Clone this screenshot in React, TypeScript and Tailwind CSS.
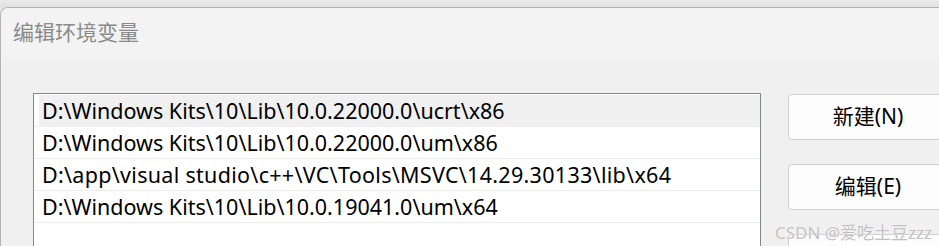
import React from "react";

const rows = [
  "D:\\Windows Kits\\10\\Lib\\10.0.22000.0\\ucrt\\x86",
  "D:\\Windows Kits\\10\\Lib\\10.0.22000.0\\um\\x86",
  "D:\\app\\visual studio\\c++\\VC\\Tools\\MSVC\\14.29.30133\\lib\\x64",
  "D:\\Windows Kits\\10\\Lib\\10.0.19041.0\\um\\x64",
];

export default function App() {
  return (
    <div
      className="relative w-[939px] h-[246px] overflow-hidden bg-[#e4e4e4] flex flex-col"
      style={{ fontFamily: '"Noto Sans", "Noto Sans CJK SC", sans-serif' }}
    >
      <div className="h-[7px] bg-gradient-to-b from-[#ececec] to-[#e0e0e0] shrink-0" />
      <div className="flex-1 flex flex-col rounded-tl-[8px] border-t border-l border-[#b4b4b4] bg-[#f0f0f0] overflow-hidden">
        <div className="h-[50px] shrink-0 bg-[#f3f3f3] pl-[12px] pt-[10px] text-[21px] leading-[28px] text-[#8a8a8a]">
          编辑环境变量
        </div>
        <div className="flex pl-[32px] pt-[35px] gap-[27px]">
          <div className="w-[728px] h-[200px] shrink-0 border border-[#82878f] bg-white pt-[1px] pl-[1px] text-[21.5px] text-black">
            {rows.map((r, i) => (
              <div key={i} className="h-[32px] border-b border-[#ececec] flex">
                <div
                  className={
                    "flex-1 h-[31px] flex items-center pl-[3px] ml-[4px] " +
                    (i === 0 ? "bg-[#f0f0f0]" : "")
                  }
                >
                  <span className={"whitespace-pre leading-none " + (i === 2 ? "tracking-[0.3px]" : "")}>{r}</span>
                </div>
              </div>
            ))}
          </div>
          <div className="flex flex-col gap-[24px] pt-[1px] shrink-0">
            {["新建(N)", "编辑(E)", ""].map((t, i) => (
              <div
                key={i}
                className="w-[160px] h-[46px] rounded-[4px] border border-[#d0d0d0] bg-[#fdfdfd] flex items-center justify-center text-[21px] text-black"
              >
                {t}
              </div>
            ))}
          </div>
        </div>
      </div>
      <div
        className="absolute left-[775px] top-[221px] text-[17px] leading-[24px] text-[#c0c0c0] whitespace-nowrap"
        style={{ textShadow: "0 0 1px #ffffff, 0 0 1px #ffffff" }}
      >
        CSDN @爱吃土豆zzz
      </div>
    </div>
  );
}
